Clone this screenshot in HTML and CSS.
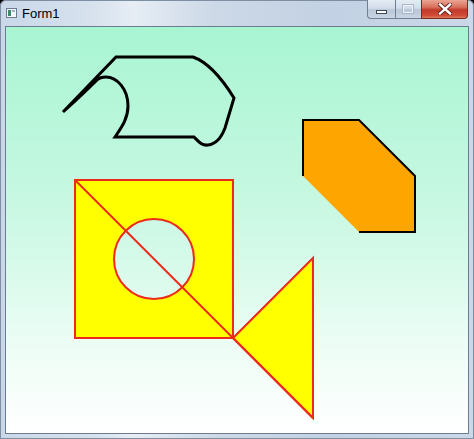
FILE: index.html
```html
<!DOCTYPE html>
<html>
<head>
<meta charset="utf-8">
<link rel="stylesheet" href="styles.css">
</head>
<body>
<div class="window">
  <div class="titlebar">
    <div class="title">
      <svg class="app-icon" width="11" height="10" viewBox="0 0 11 10">
        <rect x="0.5" y="0.5" width="10" height="9" fill="#f4f7fb" stroke="#6c7c90"/>
        <rect x="2" y="2" width="3" height="6" fill="#3d8a6a"/>
        <rect x="6" y="2" width="3" height="2" fill="#9fb2c8"/>
      </svg>
      <span class="title-text">Form1</span>
    </div>
    <div class="controls">
      <div class="btn btn-min">
        <svg width="12" height="5" viewBox="0 0 12 5"><rect x="0.5" y="0.5" width="10" height="3" fill="#fff" stroke="#3b4a5c"/></svg>
      </div>
      <div class="btn btn-max">
        <svg width="13" height="11" viewBox="0 0 13 11"><rect x="1" y="1" width="10" height="8" fill="none" stroke="#eef3f8" stroke-width="2"/><rect x="0.5" y="0.5" width="11" height="9" fill="none" stroke="#a9b6c6" stroke-width="1"/></svg>
      </div>
      <div class="btn btn-close">
        <svg width="14" height="12" viewBox="0 0 14 12">
          <path d="M2 1.5 L12 10.5 M12 1.5 L2 10.5" stroke="#5a1a14" stroke-width="4.2" stroke-linecap="square"/>
          <path d="M2 1.5 L12 10.5 M12 1.5 L2 10.5" stroke="#ffffff" stroke-width="2.4" stroke-linecap="square"/>
        </svg>
      </div>
    </div>
  </div>
  <div class="client">
    <svg class="canvas" width="462" height="406" viewBox="6 27 462 406">
      <path class="curve" d="M116 57 L193 57 Q213 64 234 98 L225 128 C222 136 217 144 208 145 C202 146 198 141 194 137 L115 137 C121 128 128 119 128 106 C128 89 117 77 106 77 C102 77 99 78 97 80 Q82 95 63 112 Z"/>
      <polygon class="octo-fill" points="303,120 359,120 415,176 415,232 359,232 303,176"/>
      <polyline class="octo-line" points="303,176 303,120 359,120 415,176 415,232 359,232"/>
      <path class="yellow" fill-rule="evenodd" d="M75 180 H233 V338 H75 Z M194 259 A40 40 0 1 0 114 259 A40 40 0 1 0 194 259 Z"/>
      <polygon class="yellow" points="233,338 313,258 313,418"/>
      <line class="redline" x1="75" y1="180" x2="313" y2="418"/>
    </svg>
  </div>
</div>
</body>
</html>
```

FILE: styles.css
```css
html, body {
  margin: 0;
  padding: 0;
  background: #000;
}
.window {
  width: 474px;
  height: 439px;
  box-sizing: border-box;
  padding: 0 5px 5px 5px;
  display: flex;
  flex-direction: column;
  background: linear-gradient(90deg, #c9d7e8 0%, #d7e2ee 20%, #e6edf5 28%, #cdd9e7 45%, #c2d1e3 70%, #cbd8e8 100%);
  border-radius: 6px 6px 0 0;
  box-shadow: inset 0 0 0 1px #7f8fa3;
}
.titlebar {
  height: 26px;
  display: flex;
  justify-content: space-between;
  align-items: flex-start;
}
.title {
  display: flex;
  align-items: center;
  height: 26px;
  padding-left: 1px;
  gap: 5px;
}
.title-text {
  font-family: "Liberation Sans", Arial, sans-serif;
  font-size: 13px;
  color: #000;
  margin-top: 1px;
}
.controls {
  display: flex;
  height: 19px;
  margin-right: 1px;
}
.btn {
  height: 19px;
  box-sizing: border-box;
  display: flex;
  align-items: center;
  justify-content: center;
  border: 1px solid #6f7f96;
  border-top: none;
}
.btn-min {
  width: 28px;
  border-radius: 0 0 0 4px;
  border-right: none;
  background: linear-gradient(180deg, #e4ebf3 0%, #d3dde9 45%, #b9c7d8 55%, #c9d5e3 100%);
  padding-top: 7px;
}
.btn-max {
  width: 26px;
  background: linear-gradient(180deg, #e4ebf3 0%, #d3dde9 45%, #b9c7d8 55%, #c9d5e3 100%);
  border-right: none;
}
.btn-close {
  width: 47px;
  border-radius: 0 0 4px 0;
  border-color: #7a2a22;
  background: linear-gradient(180deg, #e9a592 0%, #d9705c 40%, #c2392a 55%, #cf4b36 85%, #e07a5c 100%);
}
.client {
  flex: 1;
  border: 1px solid #6c7d92;
  background: linear-gradient(180deg, #a8f5d2 0%, #c9f8e3 45%, #eefdf6 80%, #ffffff 100%);
  display: flex;
}
.canvas {
  display: block;
}
.curve {
  fill: none;
  stroke: #000;
  stroke-width: 3;
  stroke-linejoin: miter;
}
.octo-fill {
  fill: #ffa500;
}
.octo-line {
  fill: none;
  stroke: #000;
  stroke-width: 2;
}
.yellow {
  fill: #ffff00;
  stroke: #ee2a1a;
  stroke-width: 2;
}
.redline {
  stroke: #ee2a1a;
  stroke-width: 2;
}
```
